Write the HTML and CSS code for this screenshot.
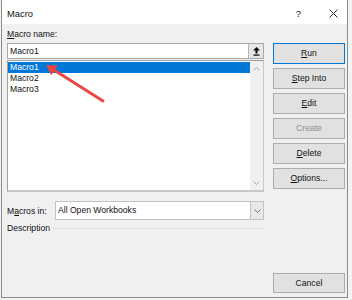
FILE: index.html
```html
<!DOCTYPE html>
<html>
<head>
<meta charset="utf-8">
<link rel="stylesheet" href="styles.css">
</head>
<body>
<div class="win">
  <div class="titlebar">
    <span class="title">Macro</span>
    <span class="help">?</span>
    <svg class="close" width="9" height="9" viewBox="0 0 9 9"><path d="M0.5 0.5 L8.5 8.5 M8.5 0.5 L0.5 8.5" stroke="#333" stroke-width="1" fill="none"/></svg>
  </div>
  <div class="body">
    <div class="lbl"><u>M</u>acro name:</div>
    <div class="main">
      <div class="left">
        <div class="input">
          <span class="itext">Macro1</span>
          <span class="upbtn"><svg width="7" height="9" viewBox="0 0 7 9"><path d="M3.5 0 L7 3.6 L4.5 3.6 L4.5 6.5 L2.5 6.5 L2.5 3.6 L0 3.6 Z" fill="#000"/><rect x="0.5" y="7.5" width="6" height="1.2" fill="#000"/></svg></span>
        </div>
        <div class="list">
          <div class="items">
            <div class="item sel">Macro1</div>
            <div class="item">Macro2</div>
            <div class="item">Macro3</div>
          </div>
          <div class="scroll">
            <svg width="7" height="4" viewBox="0 0 7 4"><path d="M0.5 3.5 L3.5 0.5 L6.5 3.5" stroke="#a6a6a6" fill="none"/></svg>
            <svg width="7" height="4" viewBox="0 0 7 4"><path d="M0.5 0.5 L3.5 3.5 L6.5 0.5" stroke="#a6a6a6" fill="none"/></svg>
          </div>
        </div>
      </div>
      <div class="right">
        <div class="btn def"><span><u>R</u>un</span></div>
        <div class="btn"><span><u>S</u>tep Into</span></div>
        <div class="btn"><span><u>E</u>dit</span></div>
        <div class="btn dis"><span>Create</span></div>
        <div class="btn"><span><u>D</u>elete</span></div>
        <div class="btn"><span><u>O</u>ptions...</span></div>
      </div>
    </div>
    <div class="inrow">
      <span class="inlbl">M<u>a</u>cros in:</span>
      <div class="combo">
        <span class="ctext">All Open Workbooks</span>
        <span class="cbtn"><svg width="7" height="4" viewBox="0 0 7 4"><path d="M0.5 0.5 L3.5 3.5 L6.5 0.5" stroke="#707070" fill="none"/></svg></span>
      </div>
    </div>
    <div class="desc">
      <span>Description</span>
      <span class="dline"></span>
    </div>
    <div class="foot">
      <div class="btn"><span>Cancel</span></div>
    </div>
  </div>
</div>
<svg class="arrow" width="352" height="300" viewBox="0 0 352 300">
  <line x1="103" y1="101" x2="54" y2="70" stroke="#e9473f" stroke-width="3" stroke-linecap="round"/>
  <polygon points="46,65 57.6,65.6 51.3,75.3" fill="#e9473f"/>
</svg>
</body>
</html>
```

FILE: styles.css
```css
html, body {
  margin: 0;
  padding: 0;
}
body {
  width: 352px;
  height: 300px;
  background: #f3f3f3;
  position: relative;
  overflow: hidden;
  font-family: "Liberation Sans", Arial, sans-serif;
  font-size: 8.6px;
  color: #111;
  padding-left: 1px;
  box-sizing: border-box;
}
.win {
  width: 347px;
  height: 298px;
  box-sizing: border-box;
  border: 1px solid #8c8c8c;
  border-top: none;
  background: #f0f0f0;
  display: flex;
  flex-direction: column;
}
.titlebar {
  height: 24px;
  background: #fff;
  display: flex;
  align-items: flex-start;
  padding-top: 8px;
  box-sizing: border-box;
  padding-left: 5px;
  line-height: 11px;
}
.title {
  font-size: 9.4px;
  flex: 1;
}
.help {
  font-size: 9.4px;
  margin-right: 28px;
}
.close {
  margin-top: 1px;
  margin-right: 9px;
}
.body {
  flex: 1;
  display: flex;
  flex-direction: column;
  padding: 5px 2px 4px 5px;
}
.lbl {
  line-height: 11px;
  height: 11px;
}
.main {
  display: flex;
  margin-top: 3px;
  gap: 9px;
}
.left {
  width: 257px;
  display: flex;
  flex-direction: column;
}
.input {
  height: 16px;
  box-sizing: border-box;
  border: 1px solid #a9a9a9;
  background: #fff;
  display: flex;
  align-items: stretch;
}
.itext {
  flex: 1;
  padding-left: 2px;
  line-height: 14px;
}
.upbtn {
  width: 15px;
  box-sizing: border-box;
  border-left: 1px solid #b8b8b8;
  background: #e6e6e6;
  display: flex;
  align-items: center;
  justify-content: center;
}
.list {
  margin-top: 1px;
  height: 132px;
  box-sizing: border-box;
  border: 1px solid #a0a0a0;
  border-right-color: #c8c8c8;
  border-bottom: 2px solid #c8c8c8;
  background: #fff;
  display: flex;
}
.items {
  flex: 1;
  padding-top: 1px;
}
.item {
  height: 11px;
  line-height: 11px;
  padding-left: 2px;
}
.item.sel {
  background: #0078d7;
  color: #fff;
}
.scroll {
  width: 13px;
  background: #f0f0f0;
  display: flex;
  flex-direction: column;
  justify-content: space-between;
  align-items: center;
  padding: 6px 0 5px;
  box-sizing: border-box;
}
.right {
  width: 72px;
  display: flex;
  flex-direction: column;
  gap: 4px;
}
.btn {
  width: 72px;
  height: 21px;
  box-sizing: border-box;
  border: 1px solid #adadad;
  background: #e1e1e1;
  display: flex;
  align-items: center;
  justify-content: center;
  line-height: 11px;
}
.btn.def {
  border-color: #0078d7;
}
.btn.dis {
  color: #8f8f8f;
}
.inrow {
  margin-top: 9px;
  display: flex;
  align-items: center;
  width: 257px;
}
.inlbl {
  width: 48px;
}
.combo {
  flex: 1;
  height: 19px;
  box-sizing: border-box;
  border: 1px solid #c3c3c3;
  background: #fff;
  display: flex;
}
.ctext {
  flex: 1;
  padding-left: 2px;
  line-height: 17px;
}
.cbtn {
  width: 13px;
  box-sizing: border-box;
  border-left: 1px solid #c3c3c3;
  background: #e8e8e8;
  display: flex;
  align-items: center;
  justify-content: center;
}
.desc {
  margin-top: 3px;
  width: 257px;
  display: flex;
  align-items: center;
  line-height: 11px;
}
.dline {
  flex: 1;
  margin-left: 3px;
  border-top: 1px dotted #cfcfcf;
}
.foot {
  margin-top: auto;
  display: flex;
  justify-content: flex-end;
}
.foot .btn {
  height: 20px;
}
.arrow {
  position: absolute;
  left: 0;
  top: 0;
}
```
